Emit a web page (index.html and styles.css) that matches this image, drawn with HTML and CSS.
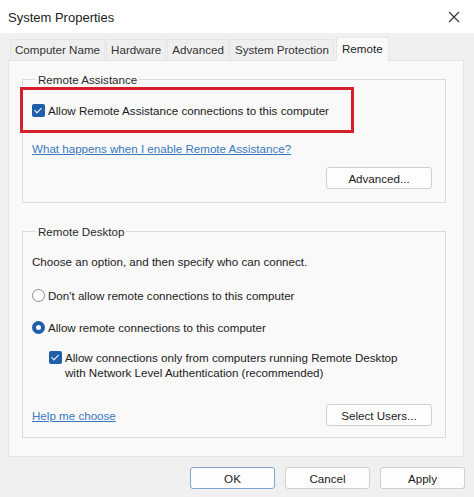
FILE: index.html
```html
<!DOCTYPE html>
<html>
<head>
    <link rel="stylesheet" href="styles.css">
</head>
<body>
    <div class="titlebar">
        <span class="title">System Properties</span>
        <svg class="close" width="12" height="12" viewBox="0 0 12 12">
            <path d="M1 1 L11 11 M11 1 L1 11" stroke="#333" stroke-width="1.1" fill="none"/>
        </svg>
    </div>
    <div class="tabs">
        <div class="tab">Computer Name</div>
        <div class="tab">Hardware</div>
        <div class="tab">Advanced</div>
        <div class="tab">System Protection</div>
        <div class="tab tab-active">Remote</div>
    </div>
    <div class="panel">
        <fieldset class="group group-assist">
            <legend>Remote Assistance</legend>
            <div class="highlight">
                <label class="check-row">
                    <span class="checkbox checked"></span>
                    Allow Remote Assistance connections to this computer
                </label>
            </div>
            <a class="link link-assist" href="#">What happens when I enable Remote Assistance?</a>
            <div class="button-row">
                <button class="btn">Advanced...</button>
            </div>
        </fieldset>
        <fieldset class="group group-desktop">
            <legend>Remote Desktop</legend>
            <p class="intro">Choose an option, and then specify who can connect.</p>
            <label class="radio-row">
                <span class="radio"></span>
                Don't allow remote connections to this computer
            </label>
            <label class="radio-row">
                <span class="radio selected"></span>
                Allow remote connections to this computer
            </label>
            <label class="check-row sub-option">
                <span class="checkbox checked"></span>
                <span>Allow connections only from computers running Remote Desktop<br>with Network Level Authentication (recommended)</span>
            </label>
            <div class="button-row footer-row">
                <a class="link" href="#">Help me choose</a>
                <button class="btn">Select Users...</button>
            </div>
        </fieldset>
    </div>
    <div class="dialog-buttons">
        <button class="btn btn-default">OK</button>
        <button class="btn">Cancel</button>
        <button class="btn">Apply</button>
    </div>
</body>
</html>
```

FILE: styles.css
```css
body {
    margin: 0;
    font-family: "Liberation Sans", Arial, sans-serif;
    font-size: 11.6px;
    line-height: 15px;
    color: #1b1b1b;
    background-color: #f0f0f0;
    height: 497px;
    overflow: hidden;
}
.titlebar {
    height: 33px;
    background-color: #fff;
    display: flex;
    align-items: center;
    justify-content: space-between;
    padding: 0 14px 0 8px;
}
.title {
    font-size: 13px;
    color: #222;
    margin-top: 1px;
}
.tabs {
    display: flex;
    align-items: flex-end;
    gap: 1px;
    height: 27px;
    padding-left: 10px;
}
.tab {
    height: 20px;
    line-height: 20px;
    padding: 0 4px;
    background-color: #efefef;
    border: 1px solid #e6e6e6;
    border-bottom: none;
    color: #333;
}
.tab-active {
    height: 23px;
    line-height: 22px;
    padding: 0 5px;
    background-color: #f9f9f9;
    color: #1b1b1b;
    margin-bottom: -1px;
    margin-left: 1px;
    position: relative;
}
.panel {
    margin: 0 10px 0 8px;
    height: 397px;
    background-color: #f9f9f9;
    border: 1px solid #e4e4e4;
    padding: 11px 17px 0 13px;
    box-sizing: border-box;
}
.group {
    margin: 0;
    border: 1px solid #dcdcdc;
    padding: 0 13px 13px 9px;
}
.group legend {
    padding: 0 2px;
    margin-left: 4px;
    color: #2a2a2a;
}
.group-desktop {
    margin-top: 21px;
    padding-bottom: 11px;
}
.highlight {
    margin-left: -12px;
    margin-top: 0;
    width: 334px;
    box-sizing: border-box;
    border: 3px solid #d3202b;
    padding: 13px 0 12px 9px;
}
.check-row, .radio-row {
    display: flex;
    align-items: center;
    gap: 3px;
}
.checkbox {
    width: 13px;
    height: 13px;
    border-radius: 2px;
    background-color: #1f5ea8;
    flex-shrink: 0;
    position: relative;
}
.checkbox.checked::after {
    content: "";
    position: absolute;
    left: 4px;
    top: 2px;
    width: 3px;
    height: 6px;
    border: solid #fff;
    border-width: 0 1.5px 1.5px 0;
    transform: rotate(45deg);
}
.radio {
    width: 11px;
    height: 11px;
    border-radius: 50%;
    border: 1px solid #8a8a8a;
    background-color: #fff;
    flex-shrink: 0;
    box-sizing: content-box;
}
.radio.selected {
    width: 5px;
    height: 5px;
    border: 4px solid #1f5ea8;
}
.link {
    color: #3a78bd;
    text-decoration: underline;
}
.link-assist {
    display: block;
    margin-top: 8px;
}
.button-row {
    display: flex;
    justify-content: flex-end;
    align-items: center;
    margin-top: 11px;
}
.footer-row {
    justify-content: space-between;
    margin-top: 24px;
}
.btn {
    width: 106px;
    height: 22px;
    font-family: inherit;
    font-size: 11.6px;
    color: #1b1b1b;
    background-color: #fdfdfd;
    border: 1px solid #d0d0d0;
    border-radius: 3px;
    padding: 0;
}
.intro {
    margin: 15px 0 0 0;
}
.radio-row {
    margin-top: 19px;
}
.radio-row + .radio-row {
    margin-top: 17px;
}
.sub-option {
    margin-top: 15px;
    margin-left: 17px;
    align-items: flex-start;
}
.sub-option .checkbox {
    margin-top: 1px;
}
.dialog-buttons {
    display: flex;
    justify-content: flex-end;
    gap: 10px;
    padding: 10px 9px 0 0;
}
.dialog-buttons .btn {
    width: 85px;
}
.btn-default {
    border-color: #7fa6d0;
}
```
